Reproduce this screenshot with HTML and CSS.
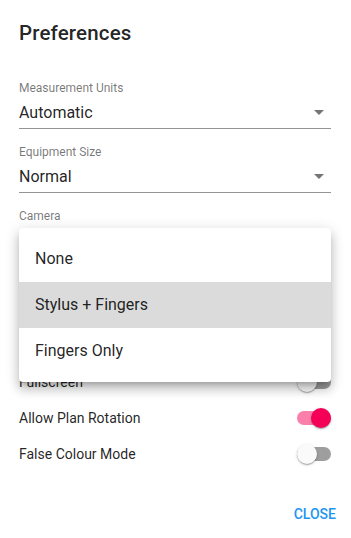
FILE: index.html
```html
<!DOCTYPE html>
<html lang="en">
<head>
  <meta charset="UTF-8">
  <title>Preferences</title>
  <link rel="stylesheet" href="styles.css">
</head>
<body>
<div class="dialog">
  <h2 class="title">Preferences</h2>
  <div class="content">
    <div class="field">
      <label>Measurement Units</label>
      <div class="select">
        <span>Automatic</span>
        <svg class="arrow" width="10" height="5" viewBox="0 0 10 5"><path d="M0 0h10L5 5z" fill="rgba(0,0,0,0.54)"/></svg>
      </div>
    </div>
    <div class="field">
      <label>Equipment Size</label>
      <div class="select">
        <span>Normal</span>
        <svg class="arrow" width="10" height="5" viewBox="0 0 10 5"><path d="M0 0h10L5 5z" fill="rgba(0,0,0,0.54)"/></svg>
      </div>
    </div>
    <div class="field">
      <label>Camera</label>
      <div class="select">
        <span></span>
      </div>
    </div>
    <div class="field is-hidden">
      <div class="select">
        <span></span>
      </div>
    </div>

    <ul class="switches">
      <li>
        <span>Fullscreen</span>
        <span class="switch"><i class="track"></i><i class="thumb"></i></span>
      </li>
      <li>
        <span>Allow Plan Rotation</span>
        <span class="switch is-on"><i class="track"></i><i class="thumb"></i></span>
      </li>
      <li>
        <span>False Colour Mode</span>
        <span class="switch"><i class="track"></i><i class="thumb"></i></span>
      </li>
    </ul>
  </div>
  <div class="actions">
    <button class="btn">Close</button>
  </div>
</div>

<ul class="menu">
  <li>None</li>
  <li class="is-selected">Stylus + Fingers</li>
  <li>Fingers Only</li>
</ul>
</body>
</html>
```

FILE: styles.css
```css
*{ margin: 0; padding: 0; box-sizing: border-box;}
body{ font-family: Roboto, "Liberation Sans", Arial, sans-serif; background: #fff; color: rgba(0,0,0,0.87); width: 351px; height: 538px; overflow: hidden;}
ul,li{ list-style: none;}

.dialog{ display: flex; flex-direction: column; height: 538px;}
.title{ font-size: 20.5px; font-weight: 500; line-height: 32px; padding: 17px 20px 0 19px; letter-spacing: .0075em;}
.content{ padding: 0 20px 0 19px;}

.field{ margin-top: 32px;}
.field + .field{ margin-top: 16px;}
.field.is-hidden{ padding-top: 14px;}
.field label{ display: block; font-size: 12px; line-height: 14px; color: rgba(0,0,0,0.54);}
.select{ height: 34px; display: flex; align-items: center; justify-content: space-between; border-bottom: 1px solid rgba(0,0,0,0.42); font-size: 16px; padding-top: 2px;}
.select .arrow{ margin-right: 7px;}

.switches{ margin-top: 43px;}
.switches li{ height: 36px; display: flex; align-items: center; justify-content: space-between; font-size: 14px;}
.switch{ position: relative; width: 34px; height: 20px; display: block;}
.switch .track{ position: absolute; left: 0; top: 3px; width: 34px; height: 14px; border-radius: 7px; background: #000; opacity: .38;}
.switch .thumb{ position: absolute; left: 0; top: 0; width: 20px; height: 20px; border-radius: 50%; background: #fafafa; box-shadow: 0 1px 3px rgba(0,0,0,.2), 0 1px 1px rgba(0,0,0,.14), 0 2px 1px -1px rgba(0,0,0,.12);}
.switch.is-on .track{ background: #f50057; opacity: .5;}
.switch.is-on .thumb{ left: 14px; background: #f50057;}

.actions{ margin-top: auto; display: flex; justify-content: flex-end; padding: 0 8px 6px;}
.btn{ font-family: inherit; font-size: 14px; font-weight: 500; text-transform: uppercase; letter-spacing: 0; color: #2196f3; background: none; border: 0; padding: 6px 7px; line-height: 24px;}

.menu{ position: absolute; left: 19px; top: 228px; width: 312px; padding: 8px 0; background: #fff; border-radius: 4px; box-shadow: 0 5px 5px -3px rgba(0,0,0,.2), 0 8px 10px 1px rgba(0,0,0,.14), 0 3px 14px 2px rgba(0,0,0,.12);}
.menu li{ height: 46px; display: flex; align-items: center; padding: 0 16px 1px; font-size: 16px;}
.menu li.is-selected{ background: rgba(0,0,0,0.14);}
```
